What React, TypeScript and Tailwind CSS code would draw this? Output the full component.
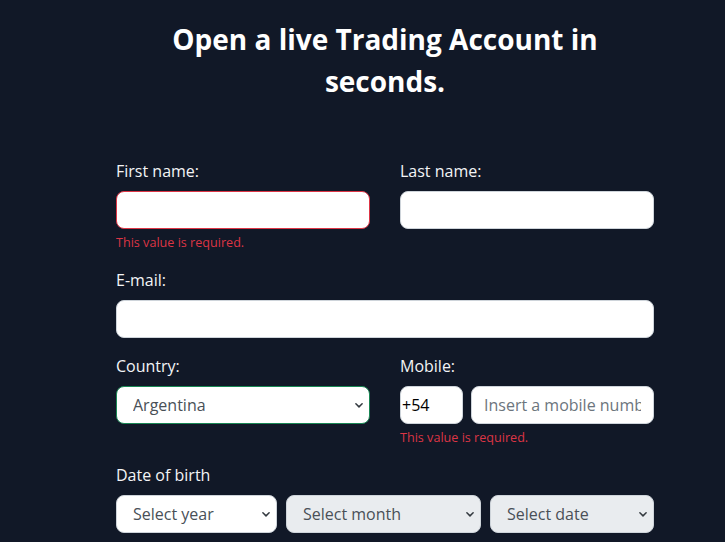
function Chevron() {
  return (
    <svg
      className="pointer-events-none absolute right-[6px] top-1/2 h-[10px] w-[10px] -translate-y-1/2"
      viewBox="0 0 16 16"
      fill="none"
      stroke="#343a40"
      strokeWidth="2.4"
      strokeLinecap="round"
      strokeLinejoin="round"
    >
      <path d="M3 6l5 5 5-5" />
    </svg>
  );
}

function Select({
  value,
  className,
  disabled,
}: {
  value: string;
  className?: string;
  disabled?: boolean;
}) {
  return (
    <div className={"relative " + (className ?? "")}>
      <select
        disabled={disabled}
        defaultValue={value}
        className={
          "h-[38px] w-full appearance-none rounded-lg border pl-4 pr-6 text-base text-[#495057] outline-none " +
          (disabled ? "border-[#ced4da] bg-[#e9ecef]" : "border-[#ced4da] bg-white")
        }
      >
        <option>{value}</option>
      </select>
      <Chevron />
    </div>
  );
}

function Label({ children }: { children: string }) {
  return <label className="mb-2 block text-base leading-6 text-[#f3f4f6]">{children}</label>;
}

function ErrorText() {
  return <p className="mt-1 text-[12.6px] leading-[19px] text-[#dc3545]">This value is required.</p>;
}

export default function App() {
  return (
    <div
      className="min-h-[542px] w-full overflow-hidden bg-[#111827] pt-[18px]"
      style={{ fontFamily: '"Open Sans", "Liberation Sans", sans-serif' }}
    >
      <div className="ml-[116px] w-[538px]">
        <h1 className="mx-auto w-[450px] text-center text-[28px] font-bold leading-[42px] text-white">
          Open a live Trading Account in seconds.
        </h1>

        <form className="mt-[57px]">
          <div className="grid grid-cols-2 gap-x-[30px]">
            <div className="mb-4">
              <Label>First name:</Label>
              <input className="h-[38px] w-full rounded-lg border border-[#dc3545] bg-white px-3 outline-none" />
              <ErrorText />
            </div>
            <div className="mb-4">
              <Label>Last name:</Label>
              <input className="h-[38px] w-full rounded-lg border border-[#ced4da] bg-white px-3 outline-none" />
            </div>
          </div>

          <div className="mb-4">
            <Label>E-mail:</Label>
            <input className="h-[38px] w-full rounded-lg border border-[#ced4da] bg-white px-3 outline-none" />
          </div>

          <div className="grid grid-cols-2 gap-x-[30px]">
            <div className="mb-4">
              <Label>Country:</Label>
              <div className="relative">
                <select
                  defaultValue="Argentina"
                  className="h-[38px] w-full appearance-none rounded-lg border border-[#198754] bg-white pl-4 pr-6 text-base text-[#495057] outline-none"
                >
                  <option>Argentina</option>
                </select>
                <Chevron />
              </div>
            </div>
            <div className="mb-4">
              <Label>Mobile:</Label>
              <div className="flex gap-2">
                <input
                  defaultValue="+54"
                  className="h-[38px] w-[63px] rounded-lg border border-[#ced4da] bg-white px-[1px] text-base text-black outline-none"
                />
                <input
                  placeholder="Insert a mobile number"
                  className="h-[38px] min-w-0 flex-1 rounded-lg border border-[#ced4da] bg-white px-3 text-base text-black outline-none placeholder:text-[#6c757d]"
                />
              </div>
              <ErrorText />
            </div>
          </div>

          <div>
            <Label>Date of birth</Label>
            <div className="flex gap-[9px]">
              <Select value="Select year" className="w-[161px]" />
              <Select value="Select month" className="w-[195px]" disabled />
              <Select value="Select date" className="flex-1" disabled />
            </div>
          </div>
        </form>
      </div>
    </div>
  );
}
